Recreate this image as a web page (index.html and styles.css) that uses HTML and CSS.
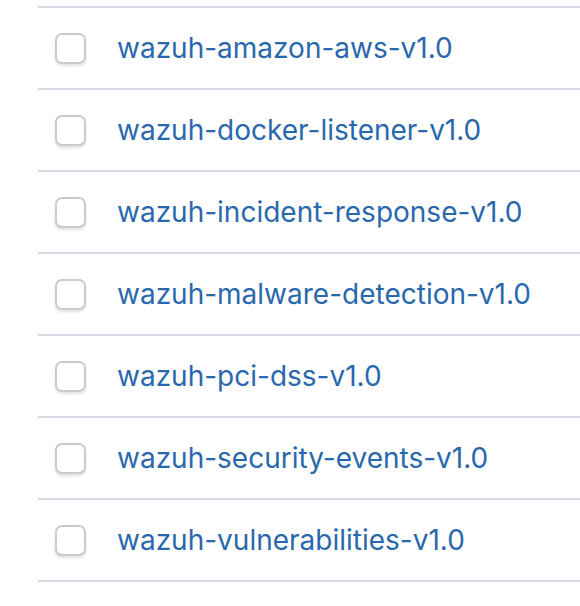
FILE: index.html
```html
<!DOCTYPE html>
<html>
<head>
<meta charset="utf-8">
<link rel="stylesheet" href="styles.css">
</head>
<body>
<ul class="list">
  <li class="row"><span class="check"></span><a class="name">wazuh-amazon-aws-v1.0</a></li>
  <li class="row"><span class="check"></span><a class="name">wazuh-docker-listener-v1.0</a></li>
  <li class="row"><span class="check"></span><a class="name">wazuh-incident-response-v1.0</a></li>
  <li class="row"><span class="check"></span><a class="name">wazuh-malware-detection-v1.0</a></li>
  <li class="row"><span class="check"></span><a class="name">wazuh-pci-dss-v1.0</a></li>
  <li class="row"><span class="check"></span><a class="name">wazuh-security-events-v1.0</a></li>
  <li class="row"><span class="check"></span><a class="name">wazuh-vulnerabilities-v1.0</a></li>
</ul>
</body>
</html>
```
FILE: styles.css
```css
html, body {
  margin: 0;
  padding: 0;
  background: #ffffff;
}
body {
  font-family: Inter, "Liberation Sans", sans-serif;
}
.list {
  list-style: none;
  margin: 6px 0 0 38px;
  padding: 0;
  border-top: 2px solid #d3dae6;
}
.row {
  display: flex;
  align-items: center;
  height: 80px;
  border-bottom: 2px solid #d3dae6;
  padding-left: 17px;
}
.check {
  box-sizing: border-box;
  width: 31px;
  height: 31px;
  border: 2px solid #cbcbcb;
  border-radius: 7px;
  background: #fff;
  box-shadow: 0 2px 3px rgba(0,0,0,0.12);
  flex: none;
}
.name {
  margin-left: 31px;
  font-size: 28px;
  color: #2a68ad;
  text-decoration: none;
  line-height: 1;
}
```
